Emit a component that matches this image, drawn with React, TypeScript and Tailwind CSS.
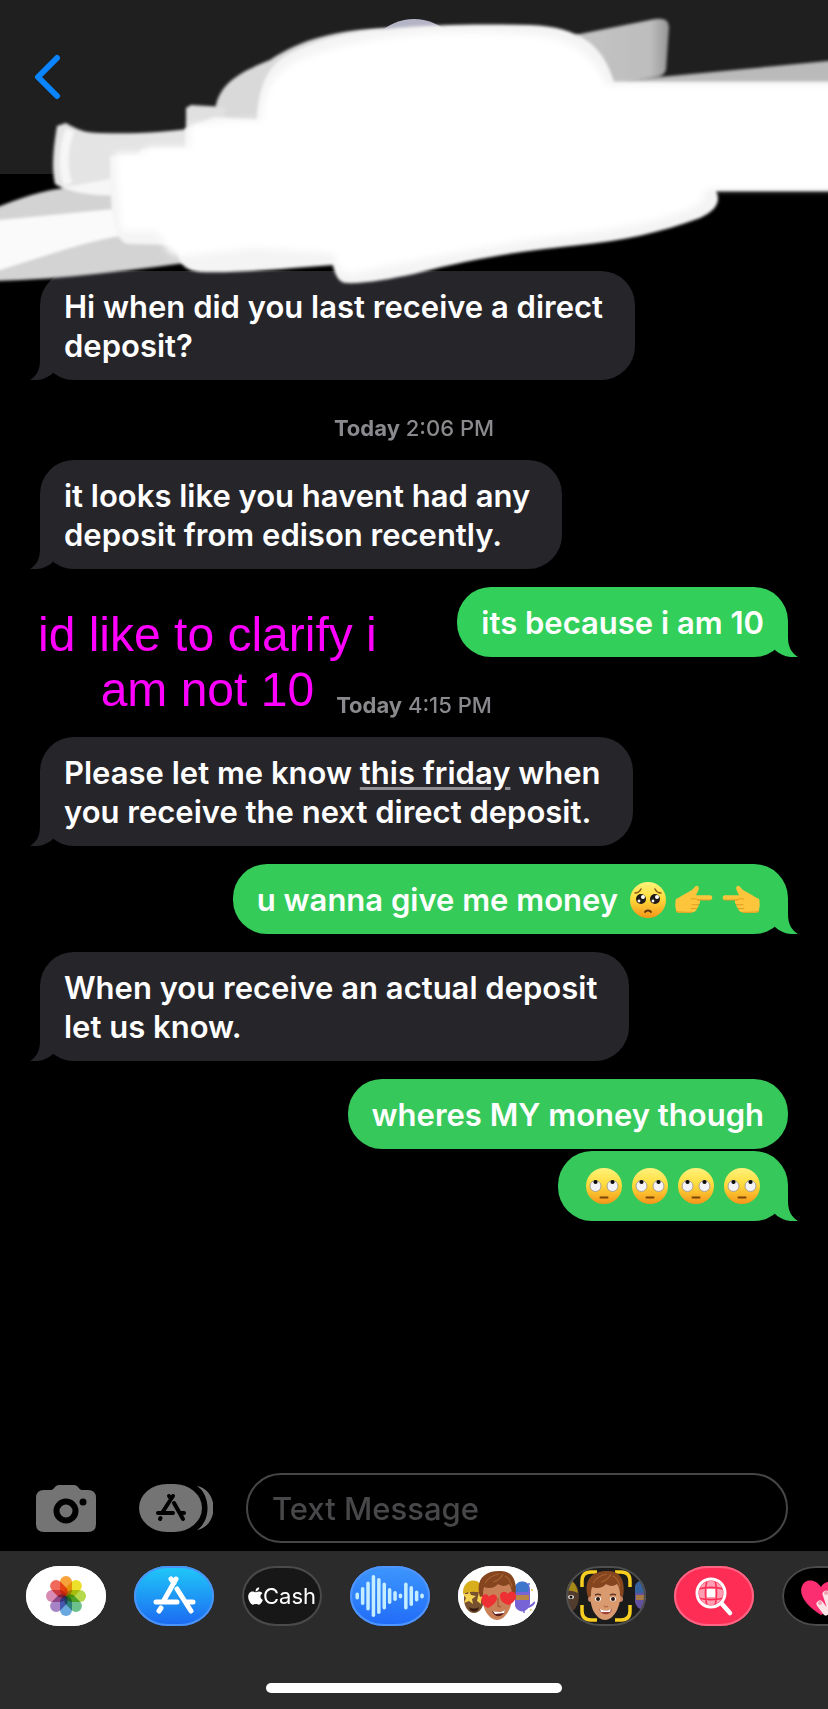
import type { ReactNode } from "react";
import { FaApple } from "react-icons/fa";

type EmojiName = "pleading" | "right" | "left" | "eyeroll";

type Message = {
  from: "them" | "me";
  body: ReactNode;
  color: string;
  tail?: boolean;
};

function FaceGradient({ id }: { id: string }) {
  return (
    <linearGradient id={id} x1="0" y1="0" x2="0" y2="1">
      <stop offset="0" stopColor="#fff27a" />
      <stop offset="0.45" stopColor="#ffdc3d" />
      <stop offset="1" stopColor="#f5961a" />
    </linearGradient>
  );
}

function Hand() {
  return (
    <>
      <path
        d="M1 18c2-1 4-2 7-4l9-5c3-2 4-5 6-5s3 3 1 6l-2 4h15c3 0 3 5 0 5H26c1 2 0 4-1 5 0 2-1 3-2 4 0 2-2 4-5 4-5 0-12 1-16 0-2-4-2-11-1-14z"
        fill="#fdc53c"
      />
      <path d="M24 19h13M17 18c3-1 6 0 8 1M18 24h7M17 28h6" stroke="#e09a1f" strokeWidth="1" fill="none" strokeLinecap="round" />
      <path d="M1 31c5 1 12 1 17 1" stroke="#e8a428" strokeWidth="1.5" fill="none" />
    </>
  );
}

function Emoji({ name }: { name: EmojiName }) {
  if (name === "right" || name === "left") {
    return (
      <svg
        role="img"
        aria-label={name === "right" ? "pointing right" : "pointing left"}
        viewBox="-1 -1 42 40"
        className={name === "left" ? "h-[38px] w-10 -scale-x-100" : "h-[38px] w-10"}
      >
        <Hand />
      </svg>
    );
  }

  if (name === "pleading") {
    return (
      <svg role="img" aria-label="pleading face" viewBox="0 0 38 38" className="size-[38px]">
        <defs>
          <FaceGradient id="pleading" />
        </defs>
        <circle cx="19" cy="19" r="18" fill="url(#pleading)" />
        <path d="M6 12c3 0 5-2 6-4M32 12c-3 0-5-2-6-4" stroke="#8a5a12" strokeWidth="1.5" fill="none" strokeLinecap="round" />
        <circle cx="12" cy="18" r="5" fill="#1d1a18" />
        <circle cx="26" cy="18" r="5" fill="#1d1a18" />
        <circle cx="14" cy="16" r="2" fill="#fff" />
        <circle cx="28" cy="16" r="2" fill="#fff" />
        <circle cx="10" cy="20" r="1.4" fill="#fff" />
        <circle cx="24" cy="20" r="1.4" fill="#fff" />
        <path d="M16 31c1-2 5-2 6 0" stroke="#5f3208" strokeWidth="1.8" fill="none" strokeLinecap="round" />
      </svg>
    );
  }

  return (
    <svg role="img" aria-label="face with rolling eyes" viewBox="0 0 38 38" className="size-[38px]">
      <defs>
        <FaceGradient id="eyeroll" />
      </defs>
      <circle cx="19" cy="19" r="18" fill="url(#eyeroll)" />
      <circle cx="10.5" cy="19" r="5.5" fill="#f4f4f8" stroke="#a9a193" />
      <circle cx="27.5" cy="19" r="5.5" fill="#f4f4f8" stroke="#a9a193" />
      <circle cx="10.5" cy="15" r="2.1" fill="#0c0a09" />
      <circle cx="27.5" cy="15" r="2.1" fill="#0c0a09" />
      <path d="M15.5 30.5h7" stroke="#7a450c" strokeWidth="2" strokeLinecap="round" />
    </svg>
  );
}

// The bubble and its tail share one colour through currentColor
function Bubble({ from, color, body, tail = true }: Message) {
  const mine = from === "me";
  return (
    <div className={`relative w-fit rounded-[34px] bg-current pt-4 pb-[15px] pl-6 ${color} ${mine ? "ml-auto pr-6" : "pr-8"}`}>
      <div className="text-[31px] leading-[39px] font-semibold whitespace-pre-line text-white">{body}</div>
      {tail && (
        <svg
          viewBox="0 0 40 36"
          className={`absolute bottom-0 h-9 w-10 fill-current ${mine ? "-right-[10px] -scale-x-100" : "-left-[10px]"}`}
          aria-hidden="true"
        >
          <path d="M10 3v13c0 11-4 16-10 20 10 1 18-2 23-7L34 6z" />
        </svg>
      )}
    </div>
  );
}

function Timestamp({ time }: { time: string }) {
  return (
    <div className="mx-auto h-20 w-fit pt-8 text-[22px] leading-8 font-medium text-[#8a8a8e]">
      <span className="font-bold">Today</span> {time}
    </div>
  );
}

// Brush strokes painted over the contact name
function Scribble() {
  return (
    <svg viewBox="0 0 828 300" className="pointer-events-none absolute inset-x-0 top-0 z-10 w-full" aria-hidden="true">
      <defs>
        <filter id="soft" x="-5%" y="-5%" width="110%" height="110%">
          <feGaussianBlur stdDeviation="1.5" />
        </filter>
        <filter id="softer" x="-5%" y="-5%" width="110%" height="110%">
          <feGaussianBlur stdDeviation="3.5" />
        </filter>
        <linearGradient id="flag" x1="0" y1="0" x2="1" y2="0">
          <stop offset="0" stopColor="#c4c4c4" />
          <stop offset="0.8" stopColor="#bdbdbd" />
          <stop offset="1" stopColor="#969696" />
        </linearGradient>
      </defs>
      <g filter="url(#soft)">
        <path d="M575 35 655 19q14-2 14 8l-3 43q-2 6-10 7l-46 8z" fill="url(#flag)" />
        <path d="m610 84 50-7 190-18v42H610z" fill="#bababa" />
        <path d="M215 112c2-28 25-40 55-52 30-20 65-31 125-32l20 90-200 20z" fill="#d9d9d9" />
        <path d="m186 108 5-3 34 2v40h-39z" fill="#e0e0e0" />
        <path d="m57 126 9-3c10 6 18 10 34 10 30 1 65 0 110-7v90l-90-20-45-1-20-11c-4-18-1-40 2-58z" fill="#e4e4e4" />
        <path d="M70 130c-8 20-7 42-2 54" stroke="#f6f6f6" strokeWidth="9" fill="none" />
        <path d="M-10 210C20 198 40 191 65 188l80 12 60 60c-70 10-145 20-215 21z" fill="#d3d3d3" />
        <path d="M62 187c20-2 34-6 60-10v18c-20 1-42 0-60-8z" fill="#f6f6f6" />
        <path d="M-10 221 125 208l10 25c-55 9-95 25-145 40z" fill="#fafafa" />
      </g>
      <circle cx="414" cy="70" r="51" fill="#b4b4c6" />
      <g filter="url(#soft)">
        <path
          d="M257 120c1-32 10-54 30-65 30-16 60-23 99-26 50-5 100-5 144-4 50 2 73 20 84 57h236v109H716c6 12-2 20-16 27-40 15-80 23-120 27-60 6-110 14-166 29-24 5-50 10-69 9q-9-2-12-18l-40 3c-35 3-70 5-93 4q-20-2-22-18l-3-9-47-1q-9-1-13-19-5-10-5-69h27l4-7h44v-20l29-12z"
          fill="#f4f4f4"
        />
      </g>
      <path
        filter="url(#softer)"
        d="M262 120c1-30 12-45 30-56 35-17 70-23 110-28 50-4 80-4 124-1 50 2 70 25 80 50h250v104H705c0 12-8 18-22 22-50 18-90 20-140 27-60 8-110 19-180 33-10 3-20 3-25-4l-4-14-80-5-72 8q-17-1-18-16l-8-9-35 0-6-78h30l3-6h42v-22l40-4z"
        fill="#fff"
      />
    </svg>
  );
}

function StoreGlyph() {
  return (
    <path
      d="M42 13 29 36M27 42l-2 3M37 13l3 4M43 23l14 22M22 36h21M52 36h7"
      fill="none"
      stroke="currentColor"
      strokeWidth="5"
      strokeLinecap="round"
    />
  );
}

function Pill({ label, fill, rim, children }: { label: string; fill: string; rim: string; children: ReactNode }) {
  return (
    <button type="button" aria-label={label} className="h-[60px] w-20 shrink-0 text-white">
      <svg viewBox="0 0 80 60" className="h-full w-full">
        <defs>
          <linearGradient id="store" x1="0" y1="0" x2="0" y2="1">
            <stop offset="0" stopColor="#1fcaf8" />
            <stop offset="1" stopColor="#1c68f2" />
          </linearGradient>
          <linearGradient id="audio" x1="0" y1="0" x2="0" y2="1">
            <stop offset="0" stopColor="#3d97fd" />
            <stop offset="1" stopColor="#216bf8" />
          </linearGradient>
          <clipPath id="pill">
            <rect width="80" height="60" rx="34" ry="30" />
          </clipPath>
        </defs>
        <rect width="80" height="60" rx="34" ry="30" fill={fill} />
        <g clipPath="url(#pill)">{children}</g>
        <rect x="1" y="1" width="78" height="58" rx="33" ry="29" fill="none" stroke={rim} strokeWidth="2" />
      </svg>
    </button>
  );
}

const petals = [
  { angle: 0, color: "#f7a23b" },
  { angle: 45, color: "#ece02a" },
  { angle: 90, color: "#b5d84c" },
  { angle: 135, color: "#6cc08b" },
  { angle: 180, color: "#6aa9e0" },
  { angle: 225, color: "#a583c4" },
  { angle: 270, color: "#d88bb5" },
  { angle: 315, color: "#f0695a" },
];

const bars = [7, 18, 29, 42, 36, 27, 16, 10, 5, 27, 20, 11, 5];

function Hair() {
  return (
    <>
      <path
        d="M22 31C17 14 26 5 41 5c14-1 19 11 16 26l-3-2c0-5-1-8-3-11-4 3-8 2-11 0-3 4-9 5-14 3-1 3-1 6-1 9z"
        fill="#84451f"
      />
      <path d="M27 17c3-5 8-8 14-9M35 16c4-1 8-4 10-8M47 10c4 2 6 6 7 11" stroke="#a9612f" strokeWidth="1.2" fill="none" />
    </>
  );
}

function Sidekicks() {
  return (
    <>
      <ellipse cx="16" cy="33" rx="10" ry="14" fill="#76502f" />
      <path d="M5 28c-1-18 21-18 21 0-7-3-14-3-21 0z" fill="#d9ae1d" />
      <path d="M11 41c3 2 7 2 10 0-1 6-9 6-10 0z" fill="#33180f" />
      <path d="M57 23c4-10 14-9 15 0v15c-2 9-12 10-15 2z" fill="#7863d6" />
      <path d="M57 20c4-7 12-5 14 1l-1 5H57z" fill="#3d76ca" />
      <path d="M58 29h13v5H58z" fill="#b98645" />
    </>
  );
}

const facePath = "M25 19c7-4 22-4 29 0 2 12-1 22-4 27-3 5-7 8-11 8s-8-3-11-8c-3-5-5-15-3-27z";

function AppDrawer() {
  return (
    <nav aria-label="Message apps" className="flex gap-7 overflow-hidden pl-[26px]">
      <Pill label="Photos" fill="#fff" rim="#fff">
        <g className="isolate">
          {petals.map((p) => (
            <rect
              key={p.angle}
              x="34"
              y="10"
              width="12"
              height="20"
              rx="6"
              fill={p.color}
              transform={`rotate(${p.angle} 40 30)`}
              className="mix-blend-multiply"
            />
          ))}
        </g>
      </Pill>
      <Pill label="App Store" fill="url(#store)" rim="#4b94f7">
        <StoreGlyph />
      </Pill>
      <button
        type="button"
        className="flex h-[60px] w-20 shrink-0 items-center justify-center rounded-[34px/30px] border-2 border-[#4a4a4a] bg-[#171717] text-[22px] text-white"
      >
        <FaApple className="h-5 w-[15px] shrink-0" aria-hidden="true" />
        Cash
      </button>
      <Pill label="Audio" fill="url(#audio)" rim="#4f95fc">
        {bars.map((h, i) => (
          <rect key={i} x={5.5 + i * 5.4} y={30 - h / 2} width="3.5" height={h} rx="1.7" fill="#c4eeff" />
        ))}
      </Pill>
      <Pill label="Memoji stickers" fill="#fff" rim="#fff">
        <Sidekicks />
        <path d="m11 25 2 4 5 1-4 3 1 5-4-3-5 2 2-5-3-4h5zM21 26l2 4 4 1-4 3v4l-4-3z" fill="#f4d352" />
        <path d="M64 37c3 6 8 5 13-1" stroke="#7863d6" strokeWidth="2" fill="none" />
        <circle cx="71" cy="18" r="1" fill="#4a6ee0" />
        <circle cx="74" cy="24" r="1" fill="#e9bd35" />
        <circle cx="66" cy="46" r="1" fill="#7863d6" />
        <circle cx="73" cy="44" r="1" fill="#e9bd35" />
        <path d={facePath} fill="#c98057" />
        <path d="M34 45c5 2 10 1 13-1-1 7-10 9-13 1z" fill="#5b1f1a" />
        <path d="M35 45c5 2 9 1 12-1l-1 3-9 1z" fill="#fff" />
        <path d="M40 32v8l3 1" stroke="#a8603c" strokeWidth="1.5" fill="none" />
        <Hair />
        <path
          d="M30 42c-5-2-8-6-6-11 2-4 6-3 7 0 3-4 8-3 8 1 0 4-5 8-9 10zM51 39c-5-1-9-4-9-9 0-4 5-6 8-2 2-4 7-3 8 1s-3 8-7 10z"
          fill="#ee2f34"
        />
      </Pill>
      <Pill label="Memoji camera" fill="#1b1b1b" rim="#4f4f4f">
        <g transform="translate(-10 0)">
          <ellipse cx="11" cy="30" rx="12" ry="17" fill="#513b2c" />
          <path d="M0 26c0-17 20-17 22 1-7-3-14-3-22-1z" fill="#a78917" />
          <ellipse cx="15" cy="31" rx="3" ry="2" fill="#e6dfdb" />
          <circle cx="15" cy="31" r="1.5" fill="#171311" />
        </g>
        <path d="M69 20c4-8 14-6 14 2v17c-5 7-12 5-14-3z" fill="#62519f" />
        <path d="M69 20c3-8 14-7 14 2v5H69z" fill="#35619d" />
        <path d="M70 29h12v5H70z" fill="#a57847" />
        <path
          d="M16 21v-6q0-9 9-9h6M49 6h6q9 0 9 9v6M16 39v6q0 9 9 9h6M49 54h6q9 0 9-9v-6"
          fill="none"
          stroke="#f8cf21"
          strokeWidth="3.5"
        />
        <circle cx="25" cy="33" r="3" fill="#c88662" />
        <circle cx="54" cy="33" r="3" fill="#c88662" />
        <path d={facePath} fill="#d99a70" />
        <path d="M29 29c2-1 4-1 6 0M44 29c2-1 4-1 6 0" stroke="#633620" strokeWidth="1.5" fill="none" />
        <ellipse cx="32" cy="33" rx="3" ry="2.3" fill="#fff" />
        <ellipse cx="47" cy="33" rx="3" ry="2.3" fill="#fff" />
        <circle cx="32" cy="33" r="2" fill="#2a1712" />
        <circle cx="47" cy="33" r="2" fill="#2a1712" />
        <path d="M38 40c1 1 3 1 4 0" stroke="#b36b49" strokeWidth="1.5" fill="none" />
        <path d="M33 43c4 2 10 2 13 0-1 7-11 7-13 0z" fill="#a4403a" />
        <path d="M34 43c4 2 8 2 11 0l-1 3h-9z" fill="#fff" />
        <Hair />
      </Pill>
      <Pill label="Images search" fill="#fe2d55" rim="#fe6584">
        <circle cx="37" cy="27" r="12" fill="#fe9fb3" />
        <path d="M33 23h8v8h-8z" fill="#fff" />
        <path d="M33 14c-2 8-2 18 0 26M41 14c2 8 2 18 0 26M24 23c8-2 18-2 26 0M24 32c8 2 18 2 26 0" stroke="#fe2d55" strokeWidth="1.5" fill="none" />
        <circle cx="37" cy="27" r="14" stroke="#fff" strokeWidth="3" fill="none" />
        <path d="m48 38 8 9" stroke="#fff" strokeWidth="4.5" strokeLinecap="round" />
      </Pill>
      <Pill label="Digital Touch" fill="#000" rim="#4a4a4a">
        <path d="M39 49C26 41 16 30 20 20c4-9 15-6 19 1 4-7 15-8 19 1 3 10-6 20-19 27z" fill="#fb2e72" />
        <path d="m44 28 5 15M38 38l6 8" stroke="#fbe3e6" strokeWidth="7" strokeLinecap="round" />
        <circle cx="44" cy="27" r="2" fill="#f0a0b2" />
        <circle cx="38" cy="37" r="2" fill="#f0a0b2" />
      </Pill>
    </nav>
  );
}

export default function App() {
  return (
    <div className="relative flex min-h-screen flex-col overflow-hidden bg-black font-['Inter','Liberation_Sans',sans-serif] text-white">
      <header className="h-[174px] bg-[#1f1f1f] pt-[54px] pl-[34px]">
        <button type="button" aria-label="Back" className="block">
          <svg viewBox="0 0 28 46" className="h-[46px] w-7">
            <path d="M23 4 4 23l19 19" fill="none" stroke="#0a84ff" strokeWidth="6" strokeLinecap="round" strokeLinejoin="round" />
          </svg>
        </button>
      </header>
      <Scribble />

      <main className="grow px-10 pt-[97px] pb-8">
        <Bubble from="them" color="text-[#26252a]" body={"Hi when did you last receive a direct\ndeposit?"} />
        <Timestamp time="2:06 PM" />
        <Bubble from="them" color="text-[#26252a]" body={"it looks like you havent had any\ndeposit from edison recently."} />

        <div className="relative mt-[18px]">
          <Bubble from="me" color="text-[#32cf5a]" body="its because i am 10" />
          <p className="absolute top-5 left-0 -ml-0.5 font-['Liberation_Sans',sans-serif] text-[48px] leading-[55px] whitespace-nowrap text-[#ff00ff]">
            <span className="mx-auto block w-fit">id like to clarify i</span>
            <span className="mx-auto block w-fit">am not 10</span>
          </p>
        </div>
        <Timestamp time="4:15 PM" />

        <div className="flex flex-col gap-[18px]">
          <Bubble
            from="them"
            color="text-[#26252a]"
            body={
              <>
                Please let me know{" "}
                <a href="#friday" className="underline decoration-[#8e8e93] decoration-3 underline-offset-3">
                  this friday
                </a>
                {" when\nyou receive the next direct deposit."}
              </>
            }
          />
          <Bubble
            from="me"
            color="text-[#34cb59]"
            body={
              <span className="flex items-center gap-[7px] pr-[3px]">
                <span className="mr-1">u wanna give me money</span>
                <Emoji name="pleading" />
                <Emoji name="right" />
                <Emoji name="left" />
              </span>
            }
          />
          <Bubble from="them" color="text-[#26252a]" body={"When you receive an actual deposit\nlet us know."} />
          <div className="flex flex-col gap-0.5">
            <Bubble from="me" color="text-[#37c85b]" body="wheres MY money though" tail={false} />
            <Bubble
              from="me"
              color="text-[#37c85b]"
              body={
                <span className="flex h-[39px] gap-2 px-[3px]">
                  <Emoji name="eyeroll" />
                  <Emoji name="eyeroll" />
                  <Emoji name="eyeroll" />
                  <Emoji name="eyeroll" />
                </span>
              }
            />
          </div>
        </div>
      </main>

      <form className="flex items-center pr-10 pb-2 pl-9 text-[#747474]">
        <button type="button" aria-label="Camera">
          <svg viewBox="0 0 60 48" className="h-12 w-[60px]">
            <path d="M8 6h7c3 0 4-5 8-5h15c4 0 5 5 8 5h6q8 0 8 8v26q0 8-8 8H8q-8 0-8-8V14q0-8 8-8z" fill="currentColor" />
            <circle cx="30" cy="27" r="9.5" fill="none" stroke="#000" strokeWidth="6" />
            <circle cx="47" cy="18" r="3.5" fill="#000" />
          </svg>
        </button>
        <button type="button" aria-label="Apps" className="ml-[43px]">
          <svg viewBox="0 0 74 48" className="h-12 w-[74px]">
            <rect width="63" height="48" rx="28" ry="24" fill="currentColor" />
            <path d="M58 2c22 4 22 40 0 44 14-9 14-35 0-44z" fill="currentColor" />
            <path
              d="M34 12 23 29M21.5 34l-.5 1M30 12l2 3M35 19l9 16M19 29h15M41 29h4"
              fill="none"
              stroke="#000"
              strokeWidth="4"
              strokeLinecap="round"
            />
          </svg>
        </button>
        <input
          type="text"
          aria-label="Text Message"
          placeholder="Text Message"
          className="ml-[33px] h-[70px] min-w-0 grow rounded-full border-2 border-[#464648] bg-transparent px-6 text-[31px] font-medium text-white placeholder:text-[#48484a]"
        />
      </form>

      <footer className="bg-[#2b2b2b] pt-[15px] pb-4">
        <AppDrawer />
        <div className="mx-auto mt-[57px] h-2.5 w-[296px] rounded-full bg-white" />
      </footer>
    </div>
  );
}
